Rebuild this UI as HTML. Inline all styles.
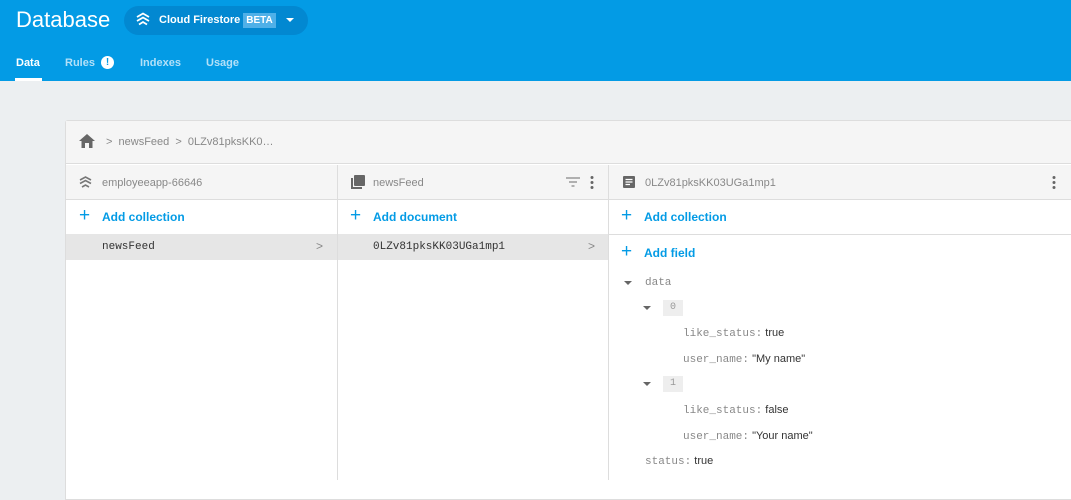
<!DOCTYPE html>
<html><head><meta charset="utf-8"><style>
*{margin:0;padding:0;box-sizing:border-box}
body{width:1071px;height:480px;overflow:hidden;background:#eceff1;font-family:"Liberation Sans",sans-serif;position:relative}
.a{position:absolute}
.hdr{left:0;top:0;width:1071px;height:81px;background:#039be5}
.mono{font-family:"Liberation Mono",monospace}
.blue{color:#039be5;font-weight:bold;font-size:12px}
.gray{color:#888}
</style></head><body>
<div class="a hdr">
 <div class="a" style="left:16px;top:7px;font-size:22px;color:#fff;">Database</div>
 <div class="a" style="left:124px;top:6px;width:184px;height:29px;border-radius:15px;background:#0288d1;"></div>
 <svg class="a" style="left:135px;top:12px" width="16" height="16" viewBox="0 0 16 16"><path d="M2 5 L8 1.5 L14 5 M2 9 L8 5.5 L14 9 M4 12.5 L8 10 L12 12.5" stroke="#fff" stroke-width="1.8" fill="none"/></svg>
 <div class="a" style="left:159px;top:14px;font-size:11px;font-weight:bold;color:#fff">Cloud Firestore</div>
 <div class="a" style="left:243px;top:13px;width:33px;height:15px;background:#4fb0e8;color:#fff;font-size:10px;font-weight:bold;text-align:center;line-height:15px">BETA</div>
 <div class="a" style="left:286px;top:18px;width:0;height:0;border-left:4px solid transparent;border-right:4px solid transparent;border-top:4px solid #fff"></div>
 <div class="a" style="left:16px;top:57px;font-size:11px;font-weight:bold;color:#fff">Data</div>
 <div class="a" style="left:15px;top:78px;width:27px;height:3px;background:#fff"></div>
 <div class="a" style="left:65px;top:57px;font-size:11px;font-weight:bold;color:#b3e0f8">Rules</div>
 <div class="a" style="left:101px;top:56px;width:13px;height:13px;border-radius:50%;background:#fff;color:#039be5;font-size:10px;font-weight:bold;text-align:center;line-height:13px">!</div>
 <div class="a" style="left:140px;top:57px;font-size:11px;font-weight:bold;color:#b3e0f8">Indexes</div>
 <div class="a" style="left:206px;top:57px;font-size:11px;font-weight:bold;color:#b3e0f8">Usage</div>
</div>
<div class="a" style="left:65px;top:120px;width:1010px;height:380px;background:#fff;border:1px solid #ddd;border-radius:3px 0 0 0"></div>
<div class="a" style="left:66px;top:121px;width:1005px;height:43px;background:#f5f5f5;border-bottom:1px solid #ddd"></div>
<svg class="a" style="left:79px;top:134px" width="16" height="14" viewBox="0 0 16 14"><path d="M8 0 L16 7 H13.5 V14 H10 V9 H6 V14 H2.5 V7 H0 Z" fill="#666"/></svg>
<div class="a gray" style="left:106px;top:136px;font-size:11px">&gt;&nbsp;&nbsp;newsFeed&nbsp;&nbsp;&gt;&nbsp;&nbsp;0LZv81pksKK0…</div>
<div class="a" style="left:66px;top:165px;width:1005px;height:35px;background:#f5f5f5;border-bottom:1px solid #ddd"></div>
<div class="a" style="left:337px;top:165px;width:1px;height:315px;background:#ddd"></div>
<div class="a" style="left:608px;top:165px;width:1px;height:315px;background:#ddd"></div>
<svg class="a" style="left:79px;top:176px" width="13" height="13" viewBox="0 0 13 13"><path d="M1 4 L6.5 1 L12 4 M1 7.5 L6.5 4.5 L12 7.5 M3 11 L6.5 9 L10 11" stroke="#777" stroke-width="1.6" fill="none"/></svg>
<div class="a gray" style="left:102px;top:177px;font-size:11px">employeeapp-66646</div>
<svg class="a" style="left:351px;top:175px" width="14" height="14" viewBox="0 0 14 14"><rect x="0" y="3" width="2" height="11" fill="#666"/><rect x="0" y="12" width="11" height="2" fill="#666"/><rect x="3" y="0" width="11" height="11" rx="1" fill="#666"/></svg>
<div class="a gray" style="left:373px;top:177px;font-size:11px">newsFeed</div>
<svg class="a" style="left:566px;top:176px" width="14" height="12"><path d="M0 2H14M3 6H11M5.5 10H8.5" stroke="#888" stroke-width="1.3"/></svg>
<svg class="a" style="left:589px;top:175px" width="6" height="15"><circle cx="3" cy="2.5" r="1.5" fill="#666"/><circle cx="3" cy="7.5" r="1.5" fill="#666"/><circle cx="3" cy="12.5" r="1.5" fill="#666"/></svg>
<svg class="a" style="left:623px;top:176px" width="12" height="12"><rect width="12" height="12" rx="1" fill="#666"/><path d="M2.5 3.5H9.5M2.5 6H9.5M2.5 8.5H7" stroke="#fff" stroke-width="1.2"/></svg>
<div class="a gray" style="left:645px;top:177px;font-size:11px">0LZv81pksKK03UGa1mp1</div>
<svg class="a" style="left:1051px;top:175px" width="6" height="15"><circle cx="3" cy="2.5" r="1.5" fill="#666"/><circle cx="3" cy="7.5" r="1.5" fill="#666"/><circle cx="3" cy="12.5" r="1.5" fill="#666"/></svg>
<!-- col1 -->
<div class="a" style="left:79px;top:208px;color:#039be5;font-size:19px;line-height:16px">+</div>
<div class="a blue" style="left:102px;top:210px">Add collection</div>
<div class="a" style="left:66px;top:234px;width:271px;height:26px;background:#e6e6e6"></div>
<div class="a mono" style="left:102px;top:241px;font-size:11px;color:#333">newsFeed</div>
<div class="a gray" style="left:316px;top:239px;font-size:12px">&gt;</div>
<!-- col2 -->
<div class="a" style="left:350px;top:208px;color:#039be5;font-size:19px;line-height:16px">+</div>
<div class="a blue" style="left:373px;top:210px">Add document</div>
<div class="a" style="left:338px;top:234px;width:270px;height:26px;background:#e6e6e6"></div>
<div class="a mono" style="left:373px;top:241px;font-size:11px;color:#333">0LZv81pksKK03UGa1mp1</div>
<div class="a gray" style="left:588px;top:239px;font-size:12px">&gt;</div>
<!-- col3 -->
<div class="a" style="left:609px;top:234px;width:462px;height:1px;background:#ddd"></div>
<div class="a" style="left:621px;top:208px;color:#039be5;font-size:19px;line-height:16px">+</div>
<div class="a blue" style="left:644px;top:210px">Add collection</div>
<div class="a" style="left:621px;top:244px;color:#039be5;font-size:19px;line-height:16px">+</div>
<div class="a blue" style="left:644px;top:246px">Add field</div>
<div class="a" style="left:624px;top:281px;border-left:4px solid transparent;border-right:4px solid transparent;border-top:4px solid #666"></div>
<div class="a mono gray" style="left:645px;top:277px;font-size:11px">data</div>
<div class="a" style="left:643px;top:306px;border-left:4px solid transparent;border-right:4px solid transparent;border-top:4px solid #666"></div>
<div class="a mono" style="left:663px;top:300px;width:20px;height:16px;background:#eee;color:#999;font-size:10px;text-align:center;line-height:16px">0</div>
<div class="a" style="left:683px;top:327px;font-size:11px"><span class="mono gray">like_status:</span> <span style="color:#333">true</span></div>
<div class="a" style="left:683px;top:353px;font-size:11px"><span class="mono gray">user_name:</span> <span style="color:#333">"My name"</span></div>
<div class="a" style="left:643px;top:382px;border-left:4px solid transparent;border-right:4px solid transparent;border-top:4px solid #666"></div>
<div class="a mono" style="left:663px;top:376px;width:20px;height:16px;background:#eee;color:#999;font-size:10px;text-align:center;line-height:16px">1</div>
<div class="a" style="left:683px;top:404px;font-size:11px"><span class="mono gray">like_status:</span> <span style="color:#333">false</span></div>
<div class="a" style="left:683px;top:430px;font-size:11px"><span class="mono gray">user_name:</span> <span style="color:#333">"Your name"</span></div>
<div class="a" style="left:645px;top:455px;font-size:11px"><span class="mono gray">status:</span> <span style="color:#333">true</span></div>
</body></html>
